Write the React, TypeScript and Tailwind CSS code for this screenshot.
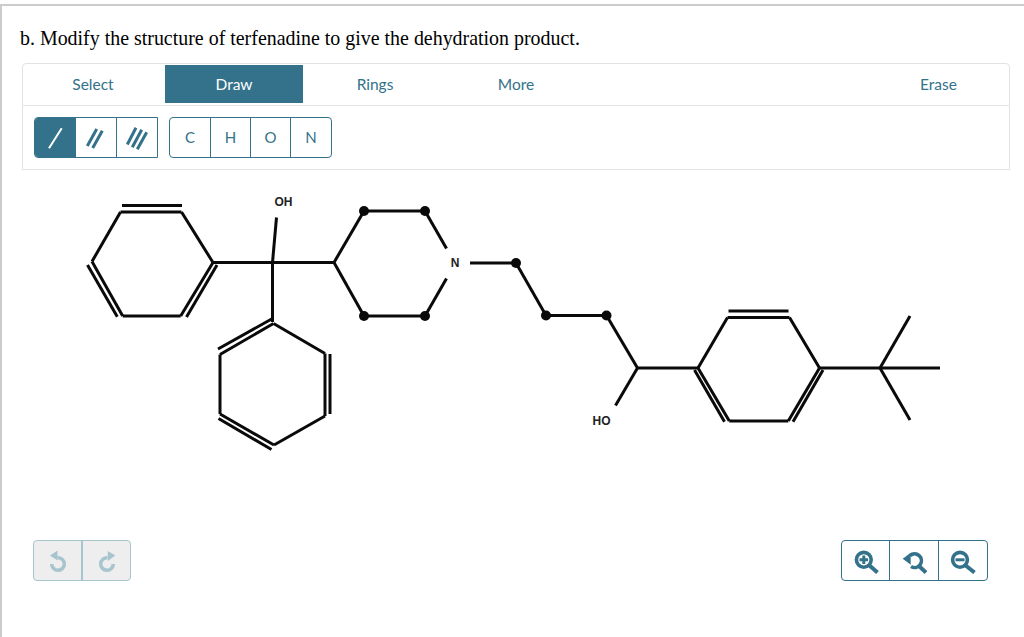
import React from "react";

type L = [number, number, number, number];

const bonds: L[] = [
  [120.5, 212, 181.5, 212], [181.5, 212, 213, 262.5], [213, 262.5, 180.7, 316], [180.7, 316, 122.7, 316], [122.7, 316, 92, 261.5], [92, 261.5, 120.5, 212],
  [122, 205.5, 182, 205.5], [87.5, 265, 117.3, 316.8], [217, 265, 186.5, 317],
  [213, 262.5, 334, 262.5], [276.5, 217.5, 272.5, 262.5], [272.5, 262.5, 272.5, 322],
  [273.5, 323.5, 325, 353.5], [325, 353.5, 325, 416], [325, 416, 274, 445], [274, 445, 220, 414], [220, 414, 220, 354.5], [220, 354.5, 273.5, 323.5],
  [218, 349, 272.5, 318.5], [330, 354, 330, 414], [218.5, 418.5, 271.5, 449.5],
  [334, 262.5, 364, 211], [364, 211, 425, 211], [425, 211, 446.5, 248.5], [446.5, 278.5, 425, 316], [425, 316, 364, 316], [364, 316, 334, 262.5],
  [470, 263, 516, 263], [516, 263, 546, 315.5], [546, 315.5, 606.5, 315.5], [606.5, 315.5, 637.5, 368], [637.5, 368, 615.5, 405.5], [637.5, 368, 698, 368],
  [698, 368, 727.5, 317.5], [727.5, 317.5, 789.5, 317.5], [789.5, 317.5, 819.5, 368], [819.5, 368, 788.3, 421], [788.3, 421, 729.3, 421], [729.3, 421, 698, 368],
  [728.5, 311, 788.5, 311], [694.5, 370, 724.5, 421.7], [823, 370, 793, 421.7],
  [819.5, 368, 880, 368], [880, 368, 910, 316], [880, 368, 940, 368], [880, 368, 910, 420],
];
const dots: [number, number][] = [[364, 211], [425, 211], [364, 316], [425, 316], [516, 263], [546, 315.5], [606.5, 315.5]];

function Molecule() {
  return (
    <svg className="block h-[360px] w-[1022px]" viewBox="2 170 1022 360">
      <g stroke="#0a0a0a" strokeWidth="3" strokeLinecap="butt">
        {bonds.map((b, i) => (
          <line key={i} x1={b[0]} y1={b[1]} x2={b[2]} y2={b[3]} />
        ))}
      </g>
      {dots.map((d, i) => (
        <circle key={i} cx={d[0]} cy={d[1]} r="5" fill="#0a0a0a" />
      ))}
      <g fill="#222" fontFamily="'Liberation Sans', sans-serif" fontWeight="700" fontSize="12" textAnchor="middle">
        <text x="283.5" y="206">OH</text>
        <text x="455" y="267">N</text>
        <text x="601.5" y="424.5">HO</text>
      </g>
    </svg>
  );
}

function BondIcon({ box, lines, color, w }: { box: string; lines: L[]; color: string; w: number }) {
  return (
    <svg className="h-[39px] w-[40px] shrink-0" viewBox={box}>
      {lines.map((l, i) => (
        <line key={i} x1={l[0]} y1={l[1]} x2={l[2]} y2={l[3]} stroke={color} strokeWidth={w} />
      ))}
    </svg>
  );
}

const teal = "#33728a";
const pale = "#a8c4ce";

function UndoIcon() {
  return (
    <svg className="h-6 w-6" viewBox="46 548.5 24 24" fill="none">
      <path d="M57.5 557.2 A6.3 6.3 0 1 1 51.7 563.5" stroke={pale} strokeWidth="3.5" />
      <path d="M50 555 L57.5 550 L57.5 560 Z" fill={pale} />
    </svg>
  );
}

function RedoIcon() {
  return (
    <svg className="h-6 w-6" viewBox="95 548.5 24 24" fill="none">
      <path d="M107.5 557.2 A6.3 6.3 0 1 0 113.3 563.5" stroke={pale} strokeWidth="3.5" />
      <path d="M115.3 555 L107.8 550.5 L107.8 560.5 Z" fill={pale} />
    </svg>
  );
}

function ZoomInIcon() {
  return (
    <svg className="h-[26px] w-[26px]" viewBox="852.5 547.5 26 26" fill="none" stroke={teal}>
      <circle cx="863.3" cy="559.3" r="7.4" strokeWidth="3.6" />
      <path d="M863.3 555 V563.6 M859 559.3 H867.6" strokeWidth="3" />
      <path d="M869 565 L877 572" strokeWidth="4" />
    </svg>
  );
}

function ZoomResetIcon() {
  return (
    <svg className="h-[26px] w-[26px]" viewBox="901 547.5 26 26" fill="none" stroke={teal}>
      <path d="M910 555.2 A6.8 6.8 0 1 1 911 566" strokeWidth="3.6" />
      <path d="M902.7 558.3 L910.7 552.3 L910.7 564.3 Z" fill={teal} stroke="none" />
      <path d="M919 565.5 L926 572" strokeWidth="4" />
    </svg>
  );
}

function ZoomOutIcon() {
  return (
    <svg className="h-[26px] w-[26px]" viewBox="950 547.5 26 26" fill="none" stroke={teal}>
      <circle cx="960" cy="559.3" r="7.4" strokeWidth="3.6" />
      <path d="M955.5 559.3 H964.5" strokeWidth="3" />
      <path d="M965.7 565 L974.5 572" strokeWidth="4" />
    </svg>
  );
}

export default function App() {
  const tab = "flex h-[38px] items-center justify-center pt-px text-[#33728a]";
  const cell = "flex items-center justify-center";
  return (
    <div className="h-[637px] w-full overflow-hidden bg-white pt-1 font-['Lato','Liberation_Sans',sans-serif]">
      <div className="h-[633px] border-l-2 border-t-2 border-[#cccccc]">
        <h1 className="pl-[18px] pt-5 font-['Liberation_Serif',serif] text-[19.93px] font-normal leading-6 text-black">
          b. Modify the structure of terfenadine to give the dehydration product.
        </h1>
        <div className="ml-5 mt-[13px] w-[988px]">
          <div className="flex h-[43px] items-start pt-px rounded-t-sm border border-[#e2e2e2] text-[15.5px]">
            <div className={`${tab} w-[142px] pr-[2px]`}>Select</div>
            <div className="flex h-[38px] w-[138px] items-center justify-center bg-[#33728a] pt-px text-white">Draw</div>
            <div className={`${tab} w-[144px]`}>Rings</div>
            <div className={`${tab} w-[138px]`}>More</div>
            <div className={`${tab} ml-auto w-[141px]`}>Erase</div>
          </div>
          <div className="flex h-[64px] items-start gap-[11px] border-x border-b border-[#e2e2e2] pl-[11px] pt-[11px]">
            <div className="flex h-[41px] w-[124px] overflow-hidden rounded-l border border-[#33728a]">
              <div className={`${cell} w-[41px] bg-[#33728a]`}>
                <BondIcon box="35 118 40 39" lines={[[48, 148.3, 60.7, 128.3]]} color="#ffffff" w={2} />
              </div>
              <div className={`${cell} w-[41px] border-r border-[#33728a]`}>
                <BondIcon box="76 118 40 39" lines={[[87.3, 146, 96.7, 129], [92.7, 148, 102.3, 130.7]]} color={teal} w={3} />
              </div>
              <div className={`${cell} flex-1`}>
                <BondIcon box="117 118 40 39" lines={[[127.3, 144.5, 136, 127.7], [132.3, 147.3, 141.7, 129.7], [137.3, 149.3, 146.7, 132.3]]} color={teal} w={3} />
              </div>
            </div>
            <div className="flex h-[41px] w-[163px] rounded border border-[#33728a] text-[15px] text-[#33728a]">
              <div className={`${cell} w-[41px] border-r border-[#33728a]`}>C</div>
              <div className={`${cell} w-[40px] border-r border-[#33728a]`}>H</div>
              <div className={`${cell} w-[40px] border-r border-[#33728a]`}>O</div>
              <div className={`${cell} flex-1`}>N</div>
            </div>
          </div>
        </div>
        <Molecule />
        <div className="mt-[10px] flex w-[986px] justify-between pl-[31px]">
          <div className="flex h-[41px] w-[98px] rounded border border-[#a8c4ce] bg-[#eeeeee]">
            <div className={`${cell} w-[49px] border-r-2 border-[#a8c4ce]`}><UndoIcon /></div>
            <div className={`${cell} flex-1`}><RedoIcon /></div>
          </div>
          <div className="flex h-[41px] w-[147px] rounded border border-[#33728a]">
            <div className={`${cell} w-[48px] border-r border-[#33728a]`}><ZoomInIcon /></div>
            <div className={`${cell} w-[49px] border-r border-[#33728a]`}><ZoomResetIcon /></div>
            <div className={`${cell} flex-1`}><ZoomOutIcon /></div>
          </div>
        </div>
      </div>
    </div>
  );
}
